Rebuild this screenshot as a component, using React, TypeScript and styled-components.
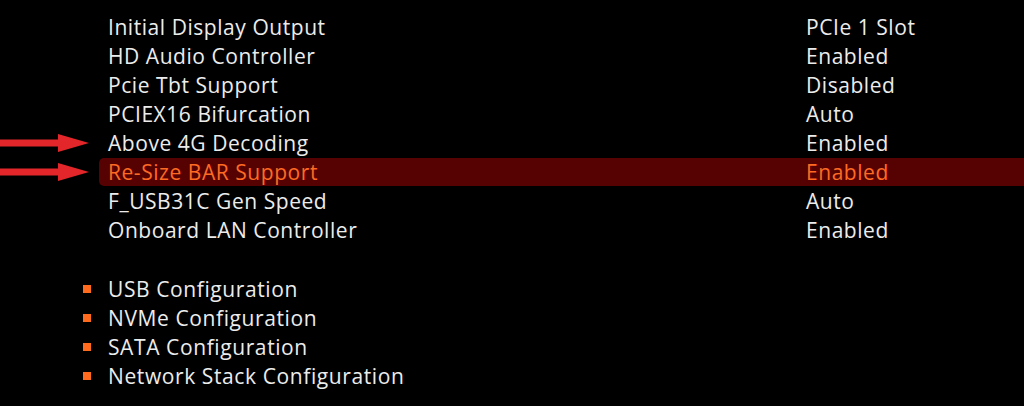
import styled, { createGlobalStyle } from "styled-components";

const GlobalStyle = createGlobalStyle`
  html, body {
    margin: 0;
    padding: 0;
    background: #000;
  }
  body {
    font-family: "Open Sans", "DejaVu Sans", sans-serif;
    color: #ececec;
    -webkit-font-smoothing: antialiased;
  }
`;

const Screen = styled.div`
  width: 1024px;
  height: 406px;
  background: #000;
  padding-top: 12px;
  box-sizing: border-box;
  overflow: hidden;
`;

const SettingList = styled.div`
  display: flex;
  flex-direction: column;
`;

const Row = styled.div`
  display: flex;
  height: 29px;
  align-items: center;
`;

const Gutter = styled.div`
  width: 99px;
  height: 100%;
  display: flex;
  align-items: center;
`;

const Bar = styled.div<{ $selected?: boolean }>`
  flex: 1;
  height: 28px;
  display: grid;
  grid-template-columns: 698px 1fr;
  align-items: center;
  padding-left: 9px;
  border-radius: 5px 0 0 5px;
  background: ${(p) => (p.$selected ? "#560203" : "transparent")};
  color: ${(p) => (p.$selected ? "#ff6a22" : "#ececec")};
  font-size: 21px;
  font-weight: 500;
  letter-spacing: 0.55px;
  line-height: 28px;
  white-space: nowrap;
`;

const MenuList = styled.div`
  display: flex;
  flex-direction: column;
  margin-top: 30px;
`;

const MenuItem = styled.div`
  display: flex;
  align-items: center;
  height: 29px;
  padding-left: 83px;
  gap: 17px;
  font-size: 21px;
  font-weight: 500;
  letter-spacing: 0.6px;
  white-space: nowrap;
`;

const Bullet = styled.span`
  width: 8px;
  height: 8px;
  background: #ff6a1c;
  flex-shrink: 0;
`;

const Arrow = () => (
  <svg width="90" height="20" viewBox="0 0 90 20">
    <rect x="0" y="6.5" width="62" height="7" fill="#e3262a" />
    <polygon points="58,1 89,10 58,19" fill="#e3262a" />
  </svg>
);

const settings = [
  { label: "Initial Display Output", value: "PCIe 1 Slot" },
  { label: "HD Audio Controller", value: "Enabled" },
  { label: "Pcie Tbt Support", value: "Disabled" },
  { label: "PCIEX16 Bifurcation", value: "Auto" },
  { label: "Above 4G Decoding", value: "Enabled", arrow: true },
  { label: "Re-Size BAR Support", value: "Enabled", arrow: true, selected: true },
  { label: "F_USB31C Gen Speed", value: "Auto" },
  { label: "Onboard LAN Controller", value: "Enabled" },
];

const menus = [
  "USB Configuration",
  "NVMe Configuration",
  "SATA Configuration",
  "Network Stack Configuration",
];

export default function App() {
  return (
    <>
      <GlobalStyle />
      <Screen>
        <SettingList>
          {settings.map((s) => (
            <Row key={s.label}>
              <Gutter>{s.arrow && <Arrow />}</Gutter>
              <Bar $selected={s.selected}>
                <span>{s.label}</span>
                <span>{s.value}</span>
              </Bar>
            </Row>
          ))}
        </SettingList>
        <MenuList>
          {menus.map((m) => (
            <MenuItem key={m}>
              <Bullet />
              <span>{m}</span>
            </MenuItem>
          ))}
        </MenuList>
      </Screen>
    </>
  );
}
